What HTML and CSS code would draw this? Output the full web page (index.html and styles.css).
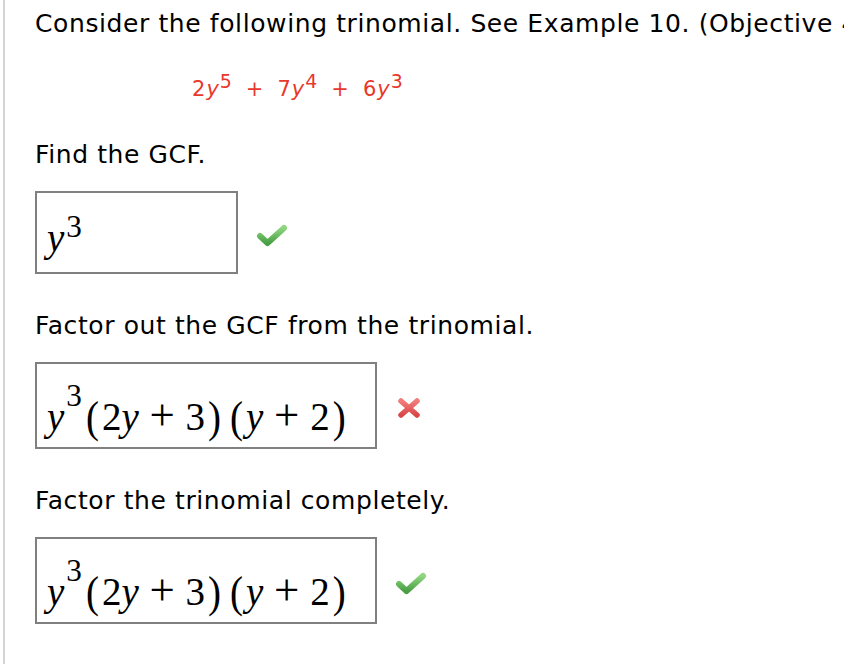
FILE: index.html
```html
<!DOCTYPE html>
<html>
<head>
  <title>Factoring a trinomial</title>
  <link rel="stylesheet" href="styles.css">
</head>
<body>
  <div class="question">
    <p class="prompt">Consider the following trinomial. See Example 10. (Objective 4)</p>
    <p class="given">2<i>y</i><sup>5</sup><span class="op">+</span>7<i>y</i><sup>4</sup><span class="op">+</span>6<i>y</i><sup>3</sup></p>

    <p class="step">Find the GCF.</p>
    <div class="answer-row">
      <div class="answer short">
        <span class="math"><span class="mi">y</span><sup>3</sup></span>
      </div>
      <svg class="mark check" viewBox="0 0 32 24" width="32" height="24">
        <defs>
          <linearGradient id="green1" x1="0" y1="0" x2="0" y2="1">
            <stop offset="0" stop-color="#8fd67f"/>
            <stop offset="1" stop-color="#4a9f45"/>
          </linearGradient>
        </defs>
        <path d="M4 13 L11.5 20 L28 5" fill="none" stroke="url(#green1)" stroke-width="6" stroke-linecap="round" stroke-linejoin="round"/>
      </svg>
    </div>

    <p class="step">Factor out the GCF from the trinomial.</p>
    <div class="answer-row">
      <div class="answer long">
        <span class="math"><span class="mi">y</span><sup>3</sup><span class="paren">(</span>2<span class="mi">y</span><span class="op">+</span>3<span class="paren close">)</span><span class="paren">(</span><span class="mi">y</span><span class="op">+</span>2<span class="paren close">)</span></span>
      </div>
      <svg class="mark cross" viewBox="0 0 28 24" width="28" height="24">
        <defs>
          <linearGradient id="red1" x1="0" y1="0" x2="0" y2="1">
            <stop offset="0" stop-color="#f27c7c"/>
            <stop offset="1" stop-color="#d94848"/>
          </linearGradient>
        </defs>
        <path d="M6 5 L22 19 M22 5 L6 19" fill="none" stroke="url(#red1)" stroke-width="5.5" stroke-linecap="round"/>
      </svg>
    </div>

    <p class="step">Factor the trinomial completely.</p>
    <div class="answer-row">
      <div class="answer long">
        <span class="math"><span class="mi">y</span><sup>3</sup><span class="paren">(</span>2<span class="mi">y</span><span class="op">+</span>3<span class="paren close">)</span><span class="paren">(</span><span class="mi">y</span><span class="op">+</span>2<span class="paren close">)</span></span>
      </div>
      <svg class="mark check" viewBox="0 0 32 24" width="32" height="24">
        <defs>
          <linearGradient id="green2" x1="0" y1="0" x2="0" y2="1">
            <stop offset="0" stop-color="#8fd67f"/>
            <stop offset="1" stop-color="#4a9f45"/>
          </linearGradient>
        </defs>
        <path d="M4 13 L11.5 20 L28 5" fill="none" stroke="url(#green2)" stroke-width="6" stroke-linecap="round" stroke-linejoin="round"/>
      </svg>
    </div>
  </div>
</body>
</html>
```

FILE: styles.css
```css
html, body {
  overflow: hidden;
}

body {
  margin: 0;
  background-color: white;
  color: black;
  font-family: "DejaVu Sans", Verdana, sans-serif;
}

p {
  margin: 0;
}

.question {
  margin-left: 3px;
  border-left: 2px solid #d4d4d4;
  padding: 9px 0 0 30px;
  min-height: 100vh;
  box-sizing: border-box;
  white-space: nowrap;
}

.prompt,
.step {
  font-size: 25px;
  line-height: 30px;
  letter-spacing: 0.6px;
}

/* красное выражение под условием */
.given {
  margin: 35px 0 0 157px;
  font-size: 21px;
  line-height: 30px;
  letter-spacing: 1px;
  color: #e8382b;
}

.given sup {
  font-size: 0.9em;
  line-height: 0;
  vertical-align: 8px;
}

.given .op {
  margin: 0 13px;
}

.step {
  margin-top: 37px;
}

.given + .step {
  margin-top: 36px;
}

.answer-row {
  display: flex;
  align-items: center;
  gap: 18px;
  margin-top: 21px;
}

.answer {
  box-sizing: border-box;
  border: 2px solid #808080;
  padding: 0 10px;
  display: flex;
  align-items: flex-end;
  font-family: "Liberation Serif", "Times New Roman", serif;
  font-size: 39px;
}

.answer.short {
  width: 203px;
  height: 83px;
  padding-bottom: 15px;
}

.answer.long {
  width: 342px;
  height: 87px;
  padding-bottom: 11px;
}

.math {
  line-height: 39px;
}

.math .mi {
  font-style: italic;
}

.math sup {
  font-size: 0.8em;
  margin-left: 2px;
  margin-right: 1px;
  vertical-align: 14px;
}

.long .math sup {
  vertical-align: 24px;
}

.math .op {
  font-size: 1.15em;
  margin: 0 0.24em;
}

.math .paren {
  display: inline-block;
  transform: scaleY(1.15);
  margin: 0 3px;
}

.math .paren.close {
  margin-right: 6px;
}

.mark {
  display: block;
  margin-top: 4px;
}
```
